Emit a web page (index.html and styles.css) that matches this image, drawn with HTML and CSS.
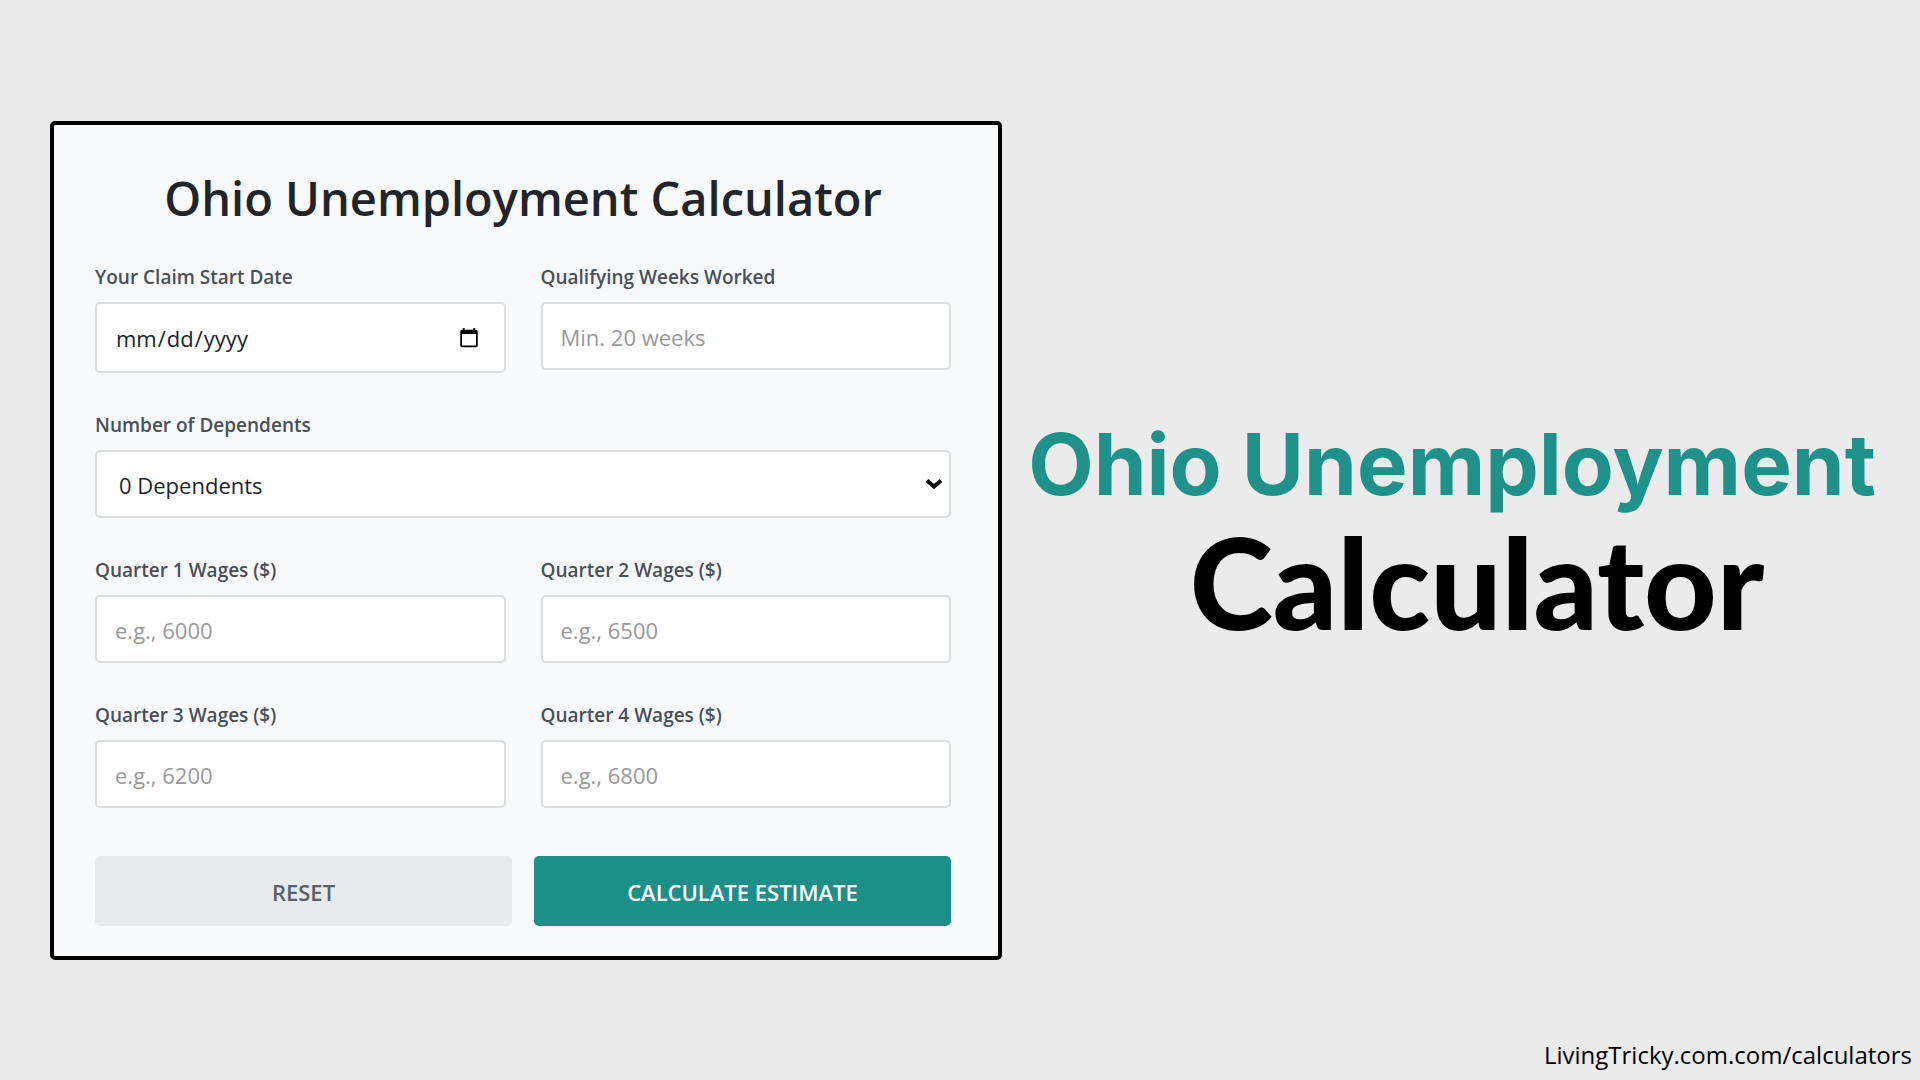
FILE: index.html
```html
<!DOCTYPE html>
<html lang="en">
<head>
    <meta charset="UTF-8">
    <meta name="viewport" content="width=device-width, initial-scale=1">
    <title>Ohio Unemployment Calculator</title>
    <link rel="stylesheet" href="styles.css">
</head>
<body>

<main class="page">
    <form class="calculator">
        <h2 class="calculator-title">Ohio Unemployment Calculator</h2>

        <div class="fields">
            <div class="field">
                <label for="claim-date">Your Claim Start Date</label>
                <input class="tall" id="claim-date" type="date">
            </div>
            <div class="field">
                <label for="weeks">Qualifying Weeks Worked</label>
                <input id="weeks" type="number" placeholder="Min. 20 weeks">
            </div>
            <div class="field wide">
                <label for="dependents">Number of Dependents</label>
                <div class="select">
                    <select id="dependents">
                        <option>0 Dependents</option>
                        <option>1 Dependent</option>
                        <option>2 Dependents</option>
                        <option>3+ Dependents</option>
                    </select>
                    <svg class="chevron" viewBox="0 0 18 12" aria-hidden="true">
                        <path d="M2 2.5l7 6 7-6"/>
                    </svg>
                </div>
            </div>
            <div class="field">
                <label for="q1">Quarter 1 Wages ($)</label>
                <input id="q1" type="number" placeholder="e.g., 6000">
            </div>
            <div class="field">
                <label for="q2">Quarter 2 Wages ($)</label>
                <input id="q2" type="number" placeholder="e.g., 6500">
            </div>
            <div class="field">
                <label for="q3">Quarter 3 Wages ($)</label>
                <input id="q3" type="number" placeholder="e.g., 6200">
            </div>
            <div class="field">
                <label for="q4">Quarter 4 Wages ($)</label>
                <input id="q4" type="number" placeholder="e.g., 6800">
            </div>
        </div>

        <div class="buttons">
            <button class="button" type="reset">RESET</button>
            <button class="button primary" type="button">CALCULATE ESTIMATE</button>
        </div>
    </form>

    <h1 class="headline">
        <span class="headline-top">Ohio Unemployment</span>
        <span class="headline-bottom">Calculator</span>
    </h1>

    <footer class="footer">
        <a href="#">LivingTricky.com.com/calculators</a>
    </footer>
</main>

</body>
</html>
```

FILE: styles.css
```css
* {
    box-sizing: border-box;
}

body {
    margin: 0;
    background: #ebebeb;
    font-family: "Open Sans", sans-serif;
}

.page {
    display: grid;
    grid-template-columns: 952fr 902fr;
    grid-template-rows: 1fr auto 1fr;
    min-height: 100vh;
    padding: 0 8px 0 50px;
    column-gap: 8px;
}

.calculator {
    grid-row: 2;
    padding: 41px 47px 30px 41px;
    border: 4px solid #000;
    border-radius: 5px;
    background: #f8f9fb;
}

.calculator-title {
    margin: 0 0 32px;
    font-size: 47px;
    font-weight: 600;
    line-height: 64px;
    text-align: center;
    color: #212529;
}

.fields {
    display: grid;
    grid-template-columns: 1fr 1fr;
    align-items: start;
    gap: 37px 35px;
}

.field.wide {
    grid-column: span 2;
}

.field label {
    display: block;
    margin-bottom: 10px;
    font-size: 19px;
    font-weight: 600;
    line-height: 30px;
    color: #495057;
}

.field input,
.field select {
    display: block;
    width: 100%;
    height: 68px;
    padding: 2px 18px 0;
    border: 2px solid #dcdddd;
    border-radius: 5px;
    background: #fff;
    font-family: inherit;
    font-size: 22px;
    color: #212529;
}

.field input.tall {
    height: 71px;
    padding-right: 22px;
}

.field input::placeholder {
    color: #999;
}

.select {
    position: relative;
}

.field select {
    padding: 2px 22px 0;
    appearance: none;
}

.chevron {
    position: absolute;
    top: 28px;
    right: 8px;
    width: 18px;
    height: 12px;
    fill: none;
    stroke: #111;
    stroke-width: 4;
    pointer-events: none;
}

.buttons {
    display: grid;
    grid-template-columns: 1fr 1fr;
    gap: 22px;
    margin-top: 48px;
}

.button {
    height: 70px;
    padding: 2px 0 0;
    border: none;
    border-radius: 5px;
    background: #e8ebed;
    font-family: inherit;
    font-size: 22px;
    font-weight: 600;
    color: #5a6067;
    cursor: pointer;
}

.button.primary {
    background: #1b8f88;
    color: #fff;
}

.headline {
    grid-row: 2;
    align-self: center;
    margin: 0;
    padding: 0 18px 36px 0;
    text-align: center;
    font-family: Inter, sans-serif;
}

.headline-top,
.headline-bottom {
    display: block;
    white-space: nowrap;
}

.headline-top {
    font-size: 85px;
    font-weight: 700;
    line-height: 120px;
    color: #1f918b;
}

.headline-bottom {
    padding-left: 50px;
    font-family: Lato, sans-serif;
    font-size: 126px;
    font-weight: 900;
    line-height: 114px;
    color: #000;
}

.footer {
    grid-column: 1 / -1;
    grid-row: 3;
    align-self: end;
    padding-bottom: 8px;
    text-align: right;
    font-size: 24px;
    line-height: 34px;
}

.footer a {
    color: #000;
    text-decoration: none;
}
```
